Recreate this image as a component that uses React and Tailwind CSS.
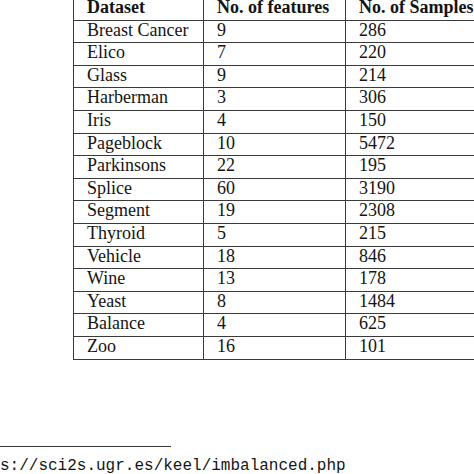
import React from "react";

const rows = [
    ["Breast Cancer", "9", "286"],
    ["Elico", "7", "220"],
    ["Glass", "9", "214"],
    ["Harberman", "3", "306"],
    ["Iris", "4", "150"],
    ["Pageblock", "10", "5472"],
    ["Parkinsons", "22", "195"],
    ["Splice", "60", "3190"],
    ["Segment", "19", "2308"],
    ["Thyroid", "5", "215"],
    ["Vehicle", "18", "846"],
    ["Wine", "13", "178"],
    ["Yeast", "8", "1484"],
    ["Balance", "4", "625"],
    ["Zoo", "16", "101"],
];

const cell = "border border-[#3a3a3a] px-[13px] pt-0 align-top leading-[19px] text-left";

export default function App() {
    return (
        <div className="w-[474px] h-[474px] overflow-hidden bg-white text-[#141414]">
            <div className="-mt-[3px] pl-[73px]">
                <table
                    className="border-collapse text-[18px] w-[440px] table-fixed"
                    style={{ fontFamily: '"Liberation Serif", "Times New Roman", serif' }}
                >
                    <colgroup>
                        <col className="w-[130px]" />
                        <col className="w-[142px]" />
                        <col className="w-[168px]" />
                    </colgroup>
                    <thead>
                        <tr className="h-[22.6px]">
                            <th className={`${cell} font-bold`}>Dataset</th>
                            <th className={`${cell} font-bold`}>No. of features</th>
                            <th className={`${cell} font-bold whitespace-nowrap`}>No. of Samples</th>
                        </tr>
                    </thead>
                    <tbody>
                        {rows.map(([name, feat, samples]) => (
                            <tr key={name} className="h-[22.6px]">
                                <td className={cell}>{name}</td>
                                <td className={cell}>{feat}</td>
                                <td className={cell}>{samples}</td>
                            </tr>
                        ))}
                    </tbody>
                </table>
            </div>

            {/* footnote */}
            <div className="mt-[86px] w-[171px] h-px bg-[#3a3a3a]" />
            <div
                className="mt-[10px] text-[16px] leading-[18px] whitespace-nowrap"
                style={{ fontFamily: '"Liberation Mono", "Courier New", monospace' }}
            >
                s://sci2s.ugr.es/keel/imbalanced.php
            </div>
        </div>
    );
}
